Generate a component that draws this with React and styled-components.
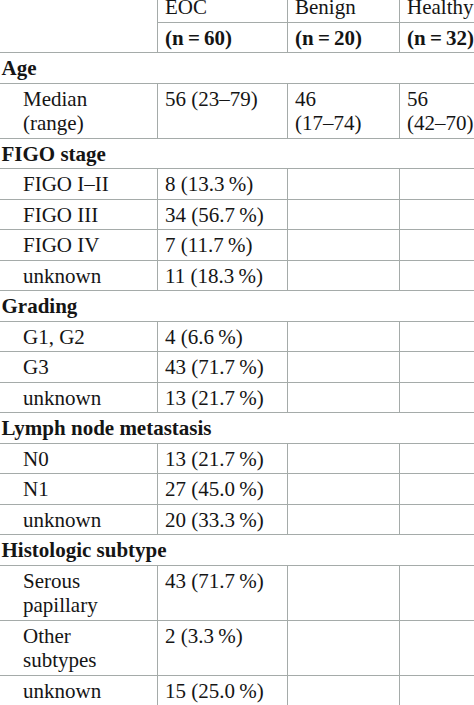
import React from "react";
import styled, { createGlobalStyle } from "styled-components";

const Global = createGlobalStyle`
  html, body {
    margin: 0;
    padding: 0;
    background: #ffffff;
    overflow: hidden;
  }
  body {
    width: 474px;
    height: 705px;
  }
`;

const LINE = "#a5aba9";

const Table = styled.table`
  border-collapse: collapse;
  table-layout: fixed;
  width: 525px;
  margin: -8px 0 0 -6px;
  font-family: "Liberation Serif", "Times New Roman", serif;
  font-size: 21px;
  line-height: 24.5px;
  color: #151515;
`;

const Col = styled.col`
  width: ${(p) => p.$w}px;
`;

const Cell = styled.td`
  border: 1px solid ${LINE};
  padding: 3px 4px 2px ${(p) => (p.$indent ? 28 : 7)}px;
  vertical-align: top;
  white-space: pre-line;
  font-weight: ${(p) => (p.$bold ? 700 : 400)};
`;

const BlankHead = styled.td`
  border-bottom: 1px solid ${LINE};
  border-right: 1px solid ${LINE};
  padding: 0;
`;

const HeadCell = styled(Cell)`
  border-top: none;
  white-space: nowrap;
  overflow: hidden;
`;

const SectionCell = styled.td`
  border-top: 1px solid ${LINE};
  border-bottom: 1px solid ${LINE};
  padding: 3px 4px 2px 7px;
  font-weight: 700;
  vertical-align: top;
  white-space: nowrap;
`;

const T = "\u2009";

const groups = [
  {
    title: "Age",
    rows: [["Median\n(range)", "56 (23–79)", "46\n(17–74)", "56\n(42–70)"]],
  },
  {
    title: "FIGO stage",
    rows: [
      ["FIGO I–II", `8 (13.3${T}%)`, "", ""],
      ["FIGO III", `34 (56.7${T}%)`, "", ""],
      ["FIGO IV", `7 (11.7${T}%)`, "", ""],
      ["unknown", `11 (18.3${T}%)`, "", ""],
    ],
  },
  {
    title: "Grading",
    rows: [
      ["G1, G2", `4 (6.6${T}%)`, "", ""],
      ["G3", `43 (71.7${T}%)`, "", ""],
      ["unknown", `13 (21.7${T}%)`, "", ""],
    ],
  },
  {
    title: "Lymph node metastasis",
    rows: [
      ["N0", `13 (21.7${T}%)`, "", ""],
      ["N1", `27 (45.0${T}%)`, "", ""],
      ["unknown", `20 (33.3${T}%)`, "", ""],
    ],
  },
  {
    title: "Histologic subtype",
    rows: [
      ["Serous\npapillary", `43 (71.7${T}%)`, "", ""],
      ["Other\nsubtypes", `2 (3.3${T}%)`, "", ""],
      ["unknown", `15 (25.0${T}%)`, "", ""],
    ],
  },
];

const heads = [
  ["EOC", "60"],
  ["Benign", "20"],
  ["Healthy", "32"],
];

export default function App() {
  return (
    <>
      <Global />
      <Table>
        <colgroup>
          <Col $w={163} />
          <Col $w={130} />
          <Col $w={112} />
          <Col $w={120} />
        </colgroup>
        <thead>
          <tr>
            <BlankHead rowSpan={2} />
            {heads.map(([name]) => (
              <HeadCell key={name}>{name}</HeadCell>
            ))}
          </tr>
          <tr>
            {heads.map(([name, n]) => (
              <Cell key={name} $bold>
                {`(n${T}=${T}${n})`}
              </Cell>
            ))}
          </tr>
        </thead>
        <tbody>
          {groups.map((g) => (
            <React.Fragment key={g.title}>
              <tr>
                <SectionCell colSpan={4}>{g.title}</SectionCell>
              </tr>
              {g.rows.map((r, i) => (
                <tr key={i}>
                  <Cell $indent>{r[0]}</Cell>
                  <Cell>{r[1]}</Cell>
                  <Cell>{r[2]}</Cell>
                  <Cell>{r[3]}</Cell>
                </tr>
              ))}
            </React.Fragment>
          ))}
        </tbody>
      </Table>
    </>
  );
}
